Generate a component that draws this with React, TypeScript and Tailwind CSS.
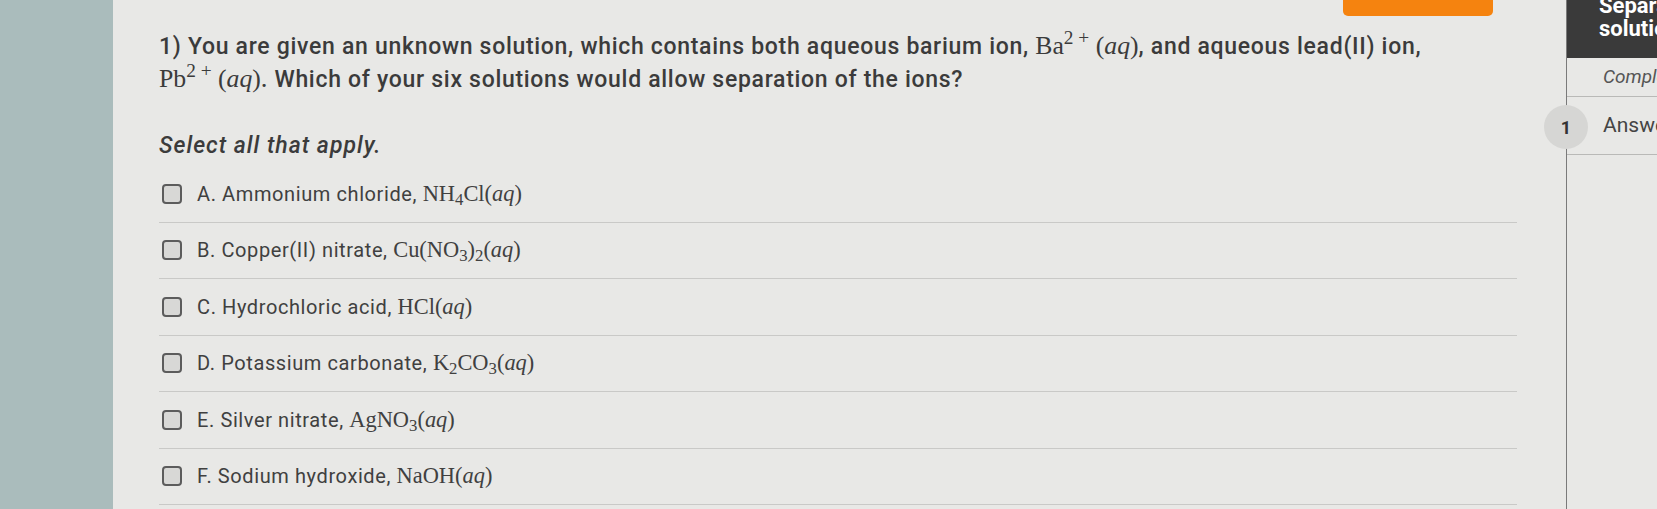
import React from 'react';

// 化学式（MathJax風のセリフ体）
function Chem({ children }: { children: React.ReactNode }) {
  return <span className="font-['Liberation_Serif',serif] text-[1.12em] font-normal tracking-normal">{children}</span>;
}

function Aq() {
  return (
    <span>
      (<span className="italic">aq</span>)
    </span>
  );
}

const options: { letter: string; name: string; formula: React.ReactNode }[] = [
  {
    letter: 'A',
    name: 'Ammonium chloride',
    formula: (
      <>
        NH<sub>4</sub>Cl<Aq />
      </>
    ),
  },
  {
    letter: 'B',
    name: 'Copper(II) nitrate',
    formula: (
      <>
        Cu(NO<sub>3</sub>)<sub>2</sub>
        <Aq />
      </>
    ),
  },
  {
    letter: 'C',
    name: 'Hydrochloric acid',
    formula: (
      <>
        HCl<Aq />
      </>
    ),
  },
  {
    letter: 'D',
    name: 'Potassium carbonate',
    formula: (
      <>
        K<sub>2</sub>CO<sub>3</sub>
        <Aq />
      </>
    ),
  },
  {
    letter: 'E',
    name: 'Silver nitrate',
    formula: (
      <>
        AgNO<sub>3</sub>
        <Aq />
      </>
    ),
  },
  {
    letter: 'F',
    name: 'Sodium hydroxide',
    formula: (
      <>
        NaOH<Aq />
      </>
    ),
  },
];

export default function App() {
  return (
    <div className="flex h-[509px] w-[1657px] overflow-hidden bg-[#e8e8e6] font-['Roboto',sans-serif]">
      {/* 左側の帯 */}
      <div className="w-[113px] shrink-0 bg-[#aabcbc]" />

      {/* 問題エリア */}
      <div className="flex min-w-0 flex-1 flex-col">
        <div className="flex h-[16px] justify-end pr-[73px]">
          <div className="h-[16px] w-[150px] rounded-b-[5px] bg-[#f5830f]" />
        </div>

        <div className="pl-[46px] pr-[49px] pt-[14px]">
          <p className="whitespace-nowrap text-[23px] font-medium leading-[32px] tracking-[0.7px] text-[#3b3b3b]">
            1) You are given an unknown solution, which contains both aqueous barium ion,{' '}
            <Chem>
              Ba<sup>2 +</sup> <Aq />
            </Chem>
            , and aqueous lead(II) ion,
            <br />
            <Chem>
              Pb<sup>2 +</sup> <Aq />
            </Chem>
            . Which of your six solutions would allow separation of the ions?
          </p>

          <p className="mt-[34px] text-[23px] font-medium italic leading-[32px] tracking-[1px] text-[#3b3b3b]">
            Select all that apply.
          </p>

          <div className="mt-[4px]">
            {options.map((o) => (
              <div
                key={o.letter}
                className="flex h-[56.5px] items-center gap-[15px] border-b border-[#c9c9c7] pl-[3px]"
              >
                <div className="h-[20px] w-[20px] shrink-0 rounded-[4px] border-2 border-[#5c5c5c] bg-[#d8d8d6]" />
                <div className="text-[20px] leading-none tracking-[0.6px] text-[#404040]">
                  {o.letter}. {o.name}, <Chem>{o.formula}</Chem>
                </div>
              </div>
            ))}
          </div>
        </div>
      </div>

      {/* 右サイドバー */}
      <div className="relative w-[91px] shrink-0 border-l border-[#7a7a7a]">
        <div className="h-[58px] overflow-hidden whitespace-nowrap bg-[#3a3a3a] pl-[32px] text-[22px] font-bold leading-[23px] text-white">
          <div className="-mt-[6px]">Separating</div>
          <div>solutions</div>
        </div>
        <div className="flex h-[39px] items-center overflow-hidden whitespace-nowrap border-b border-[#b9b9b7] pl-[36px] text-[19px] italic text-[#555]">
          Complete
        </div>
        <div className="flex h-[58px] items-center overflow-hidden whitespace-nowrap border-b border-[#b9b9b7] pl-[36px] text-[21px] text-[#444]">
          Answer
        </div>
        <div className="absolute left-[-23px] top-[105px] flex h-[44px] w-[44px] items-center justify-center rounded-full bg-[#d6d6d4] text-[18px] font-bold text-[#333]">
          1
        </div>
      </div>
    </div>
  );
}
